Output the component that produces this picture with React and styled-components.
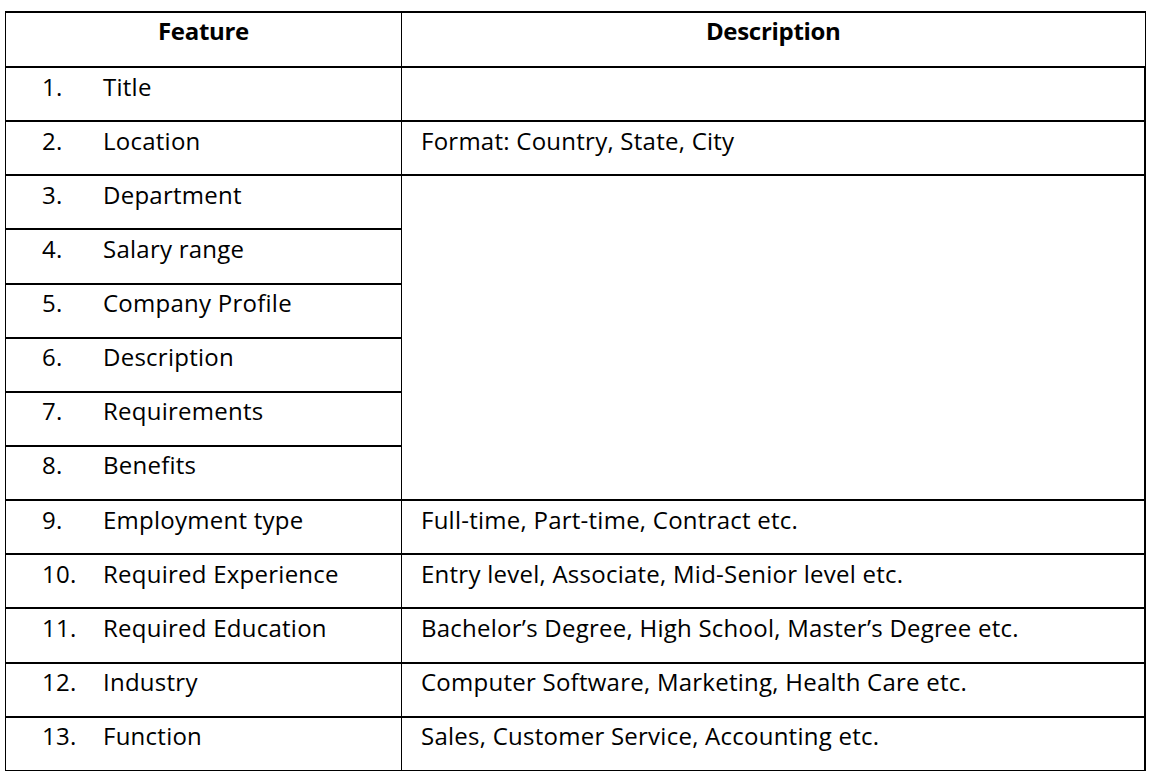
import React from 'react'
import styled, { createGlobalStyle } from 'styled-components'

const GlobalStyle = createGlobalStyle`
  html, body {
    margin: 0;
    padding: 0;
    background: #ffffff;
  }
  body {
    font-family: "Open Sans", Lato, "Liberation Sans", sans-serif;
    color: #000;
  }
`

const Page = styled.div`
  width: 1149px;
  height: 782px;
  padding: 11px 0 0 5px;
  box-sizing: border-box;
`

const Table = styled.table`
  width: 1141px;
  border-collapse: collapse;
  table-layout: fixed;
  font-size: 24px;
  letter-spacing: 0.25px;
  line-height: 28px;
`

const Row = styled.tr`
  height: ${(props) => props.$h || 54.15}px;
`

const HeadCell = styled.th`
  font-weight: 700;
  letter-spacing: -0.3px;
  text-align: center;
  vertical-align: top;
  padding: 4px 0 0;
  border: 2px solid #000;
  border-left-width: 1px;
  border-right-width: 1px;
`

const Cell = styled.td`
  vertical-align: top;
  padding: 4.5px 0 0 ${(props) => props.$pad || 36}px;
  border-top: 2px solid #000;
  border-bottom: ${(props) => (props.$end ? 1 : 2)}px solid #000;
  border-left: 1px solid #000;
  border-right: ${(props) => (props.$last ? 2 : 1)}px solid #000;
`

const Item = styled.div`
  display: flex;
`

const Num = styled.span`
  width: 61px;
  flex: none;
`

const rows = [
  ['Title', ''],
  ['Location', 'Format: Country, State, City'],
  ['Department', null],
  ['Salary range'],
  ['Company Profile'],
  ['Description'],
  ['Requirements'],
  ['Benefits'],
  ['Employment type', 'Full-time, Part-time, Contract etc.'],
  ['Required Experience', 'Entry level, Associate, Mid-Senior level etc.'],
  ['Required Education', 'Bachelor\u2019s Degree, High School, Master\u2019s Degree etc.'],
  ['Industry', 'Computer Software, Marketing, Health Care etc.'],
  ['Function', 'Sales, Customer Service, Accounting etc.'],
]

const App = () => {
  return (
    <Page>
      <GlobalStyle />
      <Table>
        <colgroup>
          <col style={{ width: 396 }} />
          <col />
        </colgroup>
        <thead>
          <Row $h={55}>
            <HeadCell>Feature</HeadCell>
            <HeadCell>Description</HeadCell>
          </Row>
        </thead>
        <tbody>
          {rows.map(([feature, desc], i) => {
            const end = i === rows.length - 1
            return (
              <Row key={feature}>
                <Cell $end={end}>
                  <Item>
                    <Num>{i + 1}.</Num>
                    <span>{feature}</span>
                  </Item>
                </Cell>
                {i === 2 && <Cell rowSpan={6} $pad={19} $last />}
                {desc !== undefined && desc !== null && (
                  <Cell $pad={19} $last $end={end}>
                    {desc}
                  </Cell>
                )}
              </Row>
            )
          })}
        </tbody>
      </Table>
    </Page>
  )
}

export default App
